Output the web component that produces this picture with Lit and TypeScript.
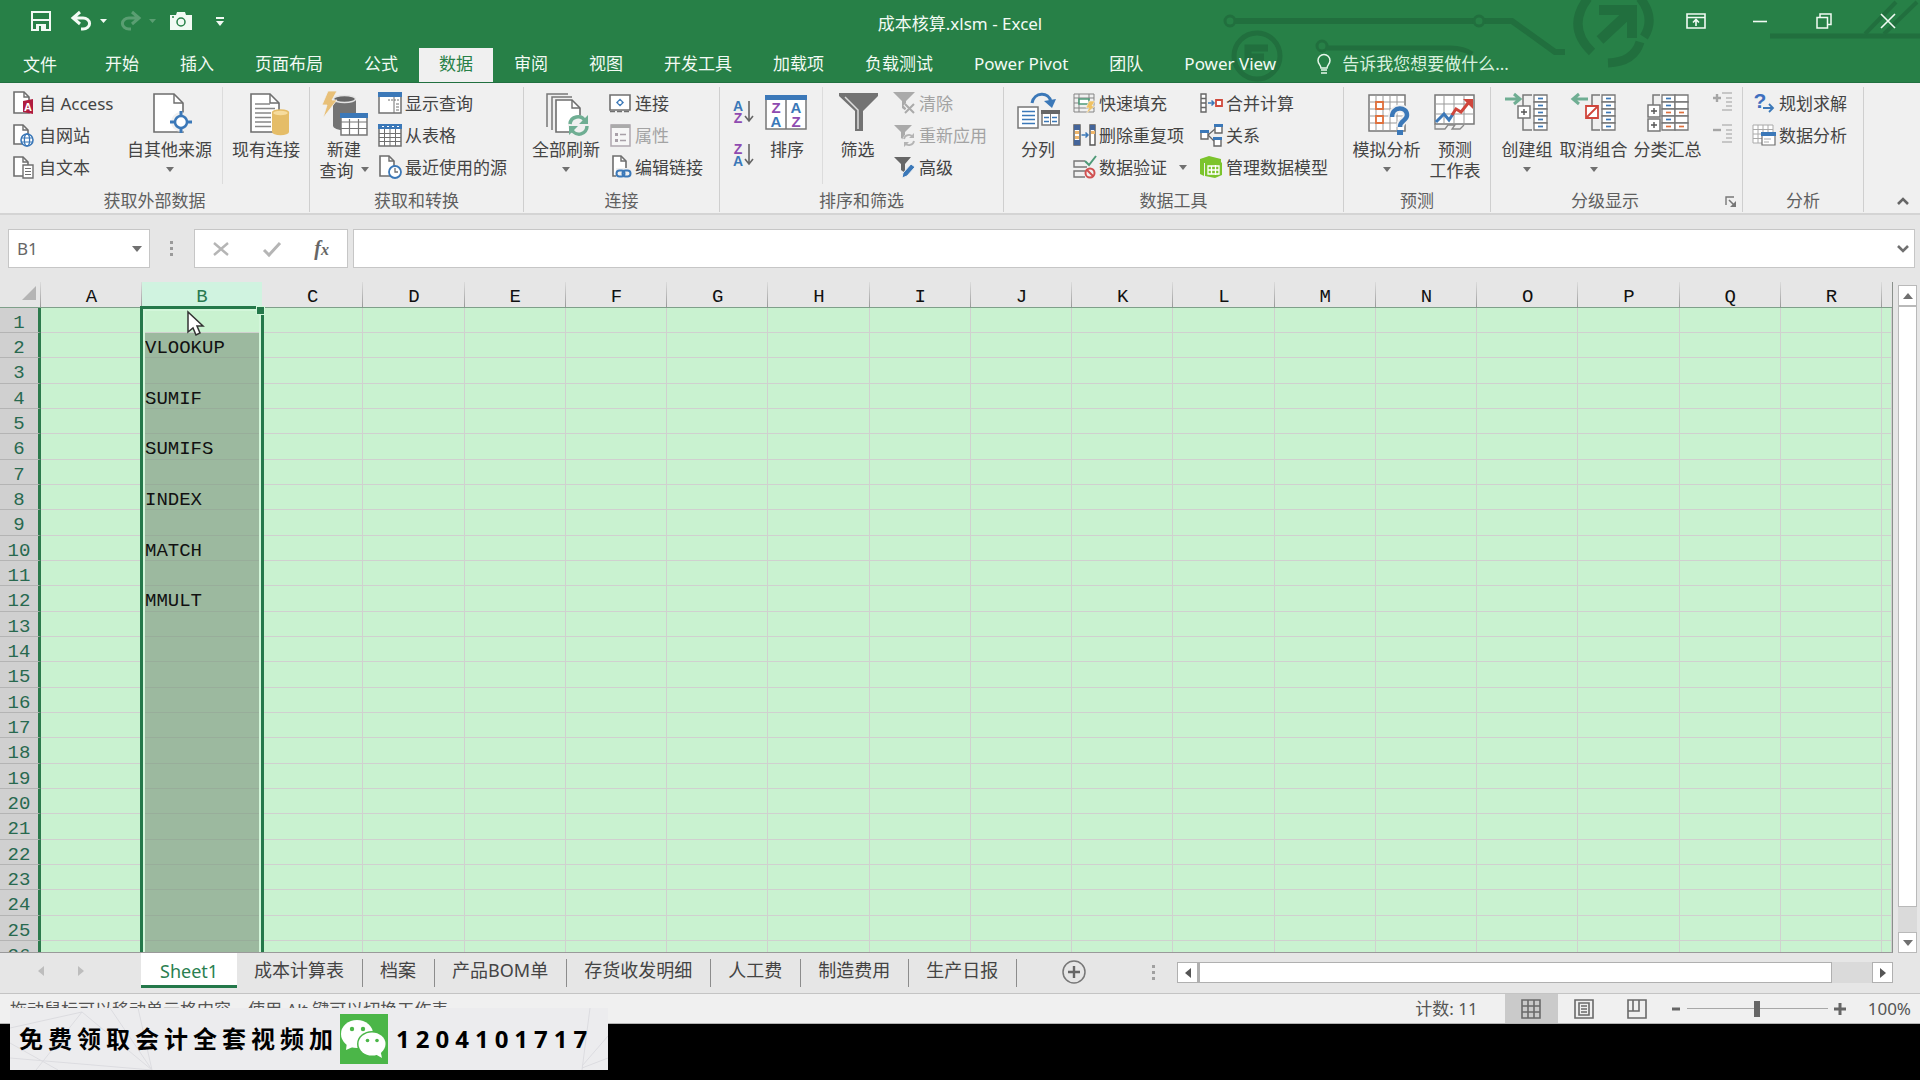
import { LitElement, html, css, svg, nothing, TemplateResult } from "lit";
import { customElement, property } from "lit/decorators.js";
import { classMap } from "lit/directives/class-map.js";

const box = (w: number, h: number, body: unknown) =>
  html`<svg width=${w} height=${h} viewBox="0 0 ${w} ${h}" fill="none" aria-hidden="true">${body}</svg>`;

const page = (x: number, y: number, w: number, h: number, f: number) => svg`
  <path d="M${x} ${y}H${x + w - f}L${x + w} ${y + f}V${y + h}H${x}Z" fill="#fff" stroke="#6e6e6e" stroke-width="1.6"/>
  <path d="M${x + w - f} ${y}V${y + f}H${x + w}" stroke="#6e6e6e" stroke-width="1.4"/>`;

const glyph = (x: number, y: number, size: number, color: string, ch: string) =>
  svg`<text x=${x} y=${y} font-size=${size} font-weight="700" font-family="Liberation Sans, sans-serif" text-anchor="middle" fill=${color}>${ch}</text>`;

const BLUE = "#3b78b8";
const PURPLE = "#8f4bb0";
const GREY = "#707070";

/* Small 24 x 24 command icons */
const small: Record<string, TemplateResult> = {
  access: box(24, 24, svg`${page(2, 1, 15, 21, 5)}<path d="M11 10L21 8V23L11 21Z" fill="#b01c3f"/>${glyph(16, 20, 11, "#fff", "A")}`),
  web: box(24, 24, svg`${page(2, 2, 14, 19, 5)}<circle cx="15" cy="17" r="6" fill="#fff" stroke=${BLUE} stroke-width="1.6"/><ellipse cx="15" cy="17" rx="2.6" ry="6" stroke=${BLUE} stroke-width="1.3"/><path d="M9 15H21M9 19H21" stroke=${BLUE} stroke-width="1.2"/>`),
  text: box(24, 24, svg`${page(2, 2, 14, 19, 5)}<path d="M11 10H21V23H11Z" fill="#fff" stroke=${GREY} stroke-width="1.4"/><path d="M13 13.500H19M13 16.500H19M13 19.500H19" stroke=${GREY}/>`),
  showQuery: box(24, 24, svg`<path d="M1 2H23V22H1Z" fill="#fff" stroke=${GREY} stroke-width="1.5"/><path d="M0 1H24V6H0Z" fill=${BLUE}/><path d="M16 6V22" stroke=${GREY}/><path d="M10 9H22" stroke=${GREY} stroke-dasharray="2 1"/><path d="M18 13H21M18 16H21M18 19H21" stroke=${GREY}/>`),
  fromTable: box(24, 24, svg`<path d="M1 2H23V23H1Z" fill="#fff" stroke=${GREY} stroke-width="1.5"/><path d="M6.500 6V23M12 6V23M17.500 6V23M1 10.500H23M1 14.500H23M1 18.500H23" stroke=${GREY}/><path d="M0 1H24V6H0Z" fill=${BLUE}/><path d="M4 3.500H21" stroke="#fff" stroke-dasharray="2 3"/>`),
  recent: box(24, 24, svg`${page(2, 1, 14, 20, 5)}<circle cx="17" cy="17" r="6" fill="#fff" stroke=${BLUE} stroke-width="1.8"/><path d="M17 13V17H20" stroke=${GREY} stroke-width="1.3"/>`),
  conn: box(24, 24, svg`<path d="M2 4H22V19H2Z" fill="#fff" stroke=${GREY} stroke-width="1.6"/><path d="M2 20.500H22" stroke=${GREY} stroke-width="1.5" stroke-dasharray="5 2"/><path d="M12 7.500L16 11.500L12 15.500L8 11.500Z" fill=${BLUE}/><circle cx="12" cy="11.500" r="1.700" fill="#fff"/>`),
  props: box(24, 24, svg`<path d="M3 2H22V23H3Z" fill="#f6f6f6" stroke="#b0a8b0" stroke-width="1.5"/><path d="M3 1.500H22V5H3Z" fill="#aaa"/><path d="M7 10H10V13H7ZM7 16H10V19H7Z" fill="#a8a0a8"/><path d="M12 11.500H18M12 17.500H18" stroke="#a8a0a8" stroke-width="1.4"/>`),
  editLinks: box(24, 24, svg`${page(5, 1, 13, 20, 5)}<path d="M8 13H24V24H8Z" fill="#f0f0f0"/><rect x="8.500" y="15.500" width="8" height="6" rx="3" stroke=${BLUE} stroke-width="2"/><rect x="14.500" y="15.500" width="8" height="6" rx="3" stroke=${BLUE} stroke-width="2"/>`),
  clear: box(24, 24, svg`<path d="M1 1H23L14 10V20L10 17V10Z" fill="#aaa"/><path d="M13 13L22 22M22 13L13 22" stroke="#f0f0f0" stroke-width="4.500"/><path d="M13 13L22 22M22 13L13 22" stroke="#aaa" stroke-width="2"/>`),
  reapply: box(24, 24, svg`<path d="M2 2H20L13 9V18L9 15V9Z" fill="#aaa"/><circle cx="17" cy="17" r="6.500" fill="#f0f0f0"/><path d="M12 16A5 5 0 0 1 21 14M22 18A5 5 0 0 1 13 20" stroke="#b4b4b4" stroke-width="1.8"/><path d="M22 10V15H17ZM12 24V19H17Z" fill="#b4b4b4"/>`),
  advanced: box(24, 24, svg`<path d="M2 2H19L13 9V18L9 15V9Z" fill="#666"/><path d="M10 23L11 18L19 9L23 12L15 21Z" fill=${BLUE} stroke="#f0f0f0"/>`),
  flash: box(24, 24, svg`<path d="M2 3H22V21H2ZM2 7H22M2 12H22M2 17H22M7 3V21M17 3V21" stroke="#858585"/><path d="M7 8H17V13H7Z" fill="#fff" stroke="#4f9a78" stroke-width="1.600"/><path d="M17 10H23L20 15H23L14 23L17 17H14Z" fill="#efc264" stroke="#f0f0f0" stroke-width=".6"/>`),
  dedupe: box(24, 24, svg`<path d="M2 2H8V22H2ZM18 2H23V22H18Z" fill="#fff" stroke="#555" stroke-width="1.4"/><path d="M2 2H8V7H2ZM2 17H8V22H2ZM18 2H23V7H18Z" fill="#44659a"/><path d="M3 8H7V11H3ZM3 13H7V16H3ZM19 8H23V11H19Z" fill="#efb66a"/><path d="M9.500 12H16M13.500 9.500L16 12L13.500 14.500" stroke=${BLUE} stroke-width="1.500"/>`),
  validate: box(24, 24, svg`<path d="M13 6H2V12H15M13 16H2V22H13" stroke="#777" stroke-width="1.400"/><path d="M13 6L17 10L24 1" stroke="#4f9a78" stroke-width="2"/><circle cx="18" cy="18" r="4.500" stroke="#d05050" stroke-width="2"/><path d="M15 15L21 21" stroke="#d05050" stroke-width="2"/>`),
  consolidate: box(24, 24, svg`<path d="M2 3H7V21H2ZM2 7.500H7M2 12H7M2 16.500H7" fill="#fff" stroke="#666" stroke-width="1.400"/><path d="M9 12H15M12.500 9.500L15 12L12.500 14.500" stroke=${BLUE} stroke-width="1.500"/><path d="M17 9H23V15H17Z" fill="#fff" stroke="#d04a3c" stroke-width="1.800"/>`),
  relations: box(24, 24, svg`<path d="M9 12L16 6M9 12L15 18" stroke="#666" stroke-width="1.300"/><path d="M2 8H9V16H2ZM16 2H23V10H16ZM15 15H22V23H15Z" fill="#fff" stroke="#666" stroke-width="1.400"/><path d="M1 7H10V10H1ZM15 1H24V4H15ZM14 14H23V17H14Z" fill=${BLUE}/>`),
  model: box(24, 24, svg`<path d="M1 4L10 1L22 4V8H5V21L1 19Z" fill="#7cc42c"/><path d="M6 8L20 5L23 8V20L16 23L6 21Z" fill="#7cc42c"/><path d="M9 11H20V19H9ZM9 15H20M12.500 11V19M16.500 10V20" stroke="#fff" stroke-width="1.300"/>`),
  expand: box(24, 24, svg`<path d="M1 8H9M5 4V12" stroke="#a5a5a5" stroke-width="2.400"/><path d="M10 3H20M14 8H20M14 12H20M14 16H20M10 20H20" stroke="#b8b8b8" stroke-width="1.400"/>`),
  shrink: box(24, 24, svg`<path d="M1 8H9" stroke="#a5a5a5" stroke-width="2.400"/><path d="M10 3H20M14 8H20M14 12H20M14 16H20M10 20H20" stroke="#b8b8b8" stroke-width="1.400"/>`),
  solver: box(24, 24, svg`${glyph(8, 17, 21, "#3f6fbf", "?")}<path d="M11 17H21M17 13L21 17L17 21" stroke=${BLUE} stroke-width="1.800"/>`),
  analysis: box(24, 24, svg`<path d="M1 2H21V20H1ZM1 6.500H21M1 11H21M1 15.500H21M6 2V20M11 2V20M16 2V20" fill="#fff" stroke="#aaa"/><path d="M10 10H23V22H10Z" fill="#fff" stroke=${GREY} stroke-width="1.200"/><path d="M9 9H24V13H9Z" fill=${BLUE}/><path d="M12 16H19M12 19H17" stroke="#aaa"/>`),
  sortAsc: box(24, 24, svg`${glyph(6, 11, 14, BLUE, "A")}${glyph(6, 23, 14, PURPLE, "Z")}<path d="M17 1V20M13 16L17 21L21 16" stroke="#666" stroke-width="1.600"/>`),
  sortDesc: box(24, 24, svg`${glyph(6, 11, 14, PURPLE, "Z")}${glyph(6, 23, 14, BLUE, "A")}<path d="M17 1V20M13 16L17 21L21 16" stroke="#666" stroke-width="1.600"/>`),
};

const cells = (x: number, w: number, colors: string[]) =>
  colors.map((c, i) => svg`<path d="M${x} ${4 + i * 7}H${x + w}V${11 + i * 7}H${x}Z" fill="#fff" stroke="#777" stroke-width="1.300"/>
    ${c ? svg`<path d="M${x + 4} ${7.5 + i * 7}H${x + w - 4}" stroke=${c} stroke-width="1.700"/>` : nothing}`);

/* Large 48 x 46 command icons */
const large: Record<string, TemplateResult> = {
  otherSource: box(48, 46, svg`${page(8, 3, 29, 38, 9)}<circle cx="35" cy="31" r="10" fill="#f0f0f0"/><circle cx="35" cy="31" r="6" fill="#fff" stroke=${BLUE} stroke-width="2.500"/><path d="M35 20V26M35 36V42M24 31H30M40 31H46" stroke=${BLUE} stroke-width="3"/>`),
  existing: box(48, 46, svg`${page(9, 3, 28, 38, 9)}<path d="M13 13H28M13 17.500H33M13 22H29M13 26.500H29M13 31H29M13 35.500H29" stroke="#888" stroke-width="1.400"/><path d="M30 22V41A8 3 0 0 0 47 41V22Z" fill="#e5bd68"/><ellipse cx="38.500" cy="22" rx="8" ry="3" fill="#f6dc9e" stroke="#e5bd68" stroke-width="1.500"/>`),
  newQuery: box(48, 46, svg`<path d="M13 8V35A11 4 0 0 0 36 35V8Z" fill="#737373"/><ellipse cx="24.500" cy="8" rx="11" ry="3.500" fill="#666" stroke="#e4e4e4" stroke-width="1.500"/><path d="M8 0H17L12 9H17L3 27L7 14H2Z" fill="#e8c078" stroke="#f0f0f0" stroke-width=".8"/><path d="M21 24H47V44H21Z" fill="#fff" stroke="#777" stroke-width="1.500"/><path d="M21 31H47M21 37.500H47M29.500 28V44M38.500 28V44" stroke="#777" stroke-width="1.200"/><path d="M20 22H48V27H20Z" fill=${BLUE}/>`),
  refresh: box(48, 46, svg`<path d="M5 36V3H26M10 39V6H30" stroke="#777" stroke-width="1.500"/>${page(14, 9, 24, 32, 8)}<circle cx="36" cy="34" r="10" fill="#f0f0f0"/><path d="M28 33A8 8 0 0 1 43 30M45 35A8 8 0 0 1 30 39" stroke="#6fae93" stroke-width="3.500"/><path d="M46 24V33H37ZM27 44V35H36Z" fill="#6fae93"/>`),
  sort: box(48, 46, svg`<path d="M3 5H43V38H3ZM23 8V38" fill="#fff" stroke="#777" stroke-width="1.500"/><path d="M2 4H44V9H2Z" fill=${BLUE}/>${glyph(13, 22, 15, PURPLE, "Z")}${glyph(13, 36, 15, BLUE, "A")}${glyph(33, 22, 15, BLUE, "A")}${glyph(33, 36, 15, PURPLE, "Z")}`),
  filter: box(48, 46, svg`<path d="M5 2H44V5L29 20V40H21V20L5 5Z" fill="#737373"/><path d="M11 6L24 19V38" stroke="#ddd" stroke-width="1.500"/>`),
  split: box(48, 46, svg`<path d="M18 12C20 1 35 0 37 11" stroke=${BLUE} stroke-width="3"/><path d="M30 10L38 17L42 8Z" fill=${BLUE}/><path d="M4 16H24V37H4Z" fill="#fff" stroke="#777" stroke-width="1.500"/><path d="M8 20.500H21M8 24.500H21M8 28.500H21M8 32.500H21" stroke=${BLUE} stroke-width="1.500"/><path d="M28 20H45V34H28Z" fill="#fff" stroke="#777" stroke-width="1.500"/><path d="M27 19H46V23H27Z" fill="#666"/><path d="M36.500 23V34" stroke="#777"/><path d="M30 26.500H43M30 30.500H43" stroke=${BLUE} stroke-width="1.500" stroke-dasharray="5 3"/>`),
  whatIf: box(48, 46, svg`<path d="M6 4H42V40H6Z" fill="#fff" stroke="#777" stroke-width="1.500"/><path d="M13 4V40M20 4V40M27 4V40M34 4V40M6 11H42M6 18H42M6 25H42M6 32H42" stroke="#999"/><path d="M13 11H20V18H13ZM13 25H20V32H13Z" fill="#fff" stroke="#e0703c" stroke-width="1.800"/><path d="M29 26C29 15 44 15 44 24C44 30 37 29 37 36" stroke="#f0f0f0" stroke-width="8"/><path d="M29 26C29 15 44 15 44 24C44 30 37 29 37 36" stroke=${BLUE} stroke-width="4.500"/><path d="M34 39H40V44H34Z" fill=${BLUE}/>`),
  forecast: box(48, 46, svg`<path d="M4 4H43V33H4Z" fill="#fff" stroke="#777" stroke-width="1.500"/><path d="M13 4V33M23 4V33M33 4V33M4 13H43M4 23H43" stroke="#999"/><path d="M4 33V38H14L17 34H24L21 38H29L33 34" stroke="#888" stroke-width="1.300"/><path d="M5 31L13 23L18 29L22 23" stroke=${BLUE} stroke-width="3"/><path d="M21 24L25 18L30 21L38 11" stroke="#d0463c" stroke-width="3"/><path d="M32 8H42V18Z" fill="#d0463c"/>`),
  group: box(48, 46, svg`<path d="M2 8H16M11 3L17 8L11 13" stroke="#6fae93" stroke-width="3"/><path d="M29 4H20V15M20 27V39H29" stroke="#777" stroke-width="1.500"/><path d="M15 15H27V27H15Z" fill="#fff" stroke="#777" stroke-width="1.500"/><path d="M18 21H24M21 18V24" stroke="#555" stroke-width="1.400"/>${cells(31, 13, [BLUE, BLUE, BLUE, BLUE, BLUE])}`),
  ungroup: box(48, 46, svg`<path d="M18 8H4M9 3L3 8L9 13" stroke="#6fae93" stroke-width="3"/><path d="M30 4H22V15M22 27V39H30" stroke="#777" stroke-width="1.500"/><path d="M16 15H28V27H16ZM17 26L27 16" fill="#fff" stroke="#d0463c" stroke-width="1.800"/>${cells(32, 13, [BLUE, BLUE, BLUE, BLUE, BLUE])}`),
  subtotal: box(48, 46, svg`<path d="M16 4H9V14" stroke="#777" stroke-width="1.500"/><path d="M4 14H16V26H4ZM4 28H16V40H4Z" fill="#fff" stroke="#777" stroke-width="1.500"/><path d="M7 20H13M10 17V23M7 34H13M10 31V37" stroke="#555" stroke-width="1.400"/>${cells(18, 13, [BLUE, BLUE, "#e0703c", BLUE, "#e0703c"])}${cells(31, 13, ["", "", "#e0703c", "", "#e0703c"])}`),
};

const caret = html`<svg class="caret" width="8" height="5" viewBox="0 0 8 5" aria-hidden="true"><path d="M0 0H8L4 5Z" fill="#707070"/></svg>`;

const font = css`
  :host { box-sizing: border-box; font-family: "Noto Sans", "Noto Sans CJK SC", sans-serif; }
  * { box-sizing: border-box; }
  button, input { font: inherit; color: inherit; border: 0; padding: 0; margin: 0; background: none; }
  svg { display: block; flex: none; overflow: visible; }
`;

/* ---------- Title bar and ribbon tabs ---------- */
@customElement("title-bar")
class TitleBar extends LitElement {
  static styles = [font, css`
    :host { display: block; position: relative; background: #278047; color: #f2faf4; font-size: 17px; line-height: 24px; border-bottom: 1px solid #217040; }
    .art { position: absolute; top: 0; right: 0; overflow: hidden; }
    .top { position: relative; display: grid; grid-template-columns: 1fr auto 1fr; align-items: center; height: 47px; }
    .quick { display: flex; align-items: center; align-self: start; padding-left: 30px; height: 42px; }
    .quick button { display: flex; align-items: center; }
    .save { margin-right: 19px; }
    .undo, .redo { gap: 8px; margin-right: 13px; }
    .redo { opacity: .25; }
    .camera { margin-right: 23px; }
    .win { display: flex; justify-content: flex-end; align-self: start; height: 42px; }
    .win button { width: 64px; display: grid; place-items: center; }
    .tabs { position: relative; display: flex; height: 34px; margin-top: 1px; gap: 1px; }
    .tab { padding: 0 20px; white-space: nowrap; line-height: 30px; padding-bottom: 3px; }
    .tab.file { padding: 0 27px 0 23px; }
    .tab.on { background: #f0f0f0; color: #278047; }
    .tell { display: flex; align-items: center; gap: 11px; margin-left: 20px; padding-bottom: 2px; }
    .tell input { width: 180px; }
    .tell input::placeholder { color: #d9f0df; opacity: 1; }
  `];
  render() {
    const tabs = ["文件", "开始", "插入", "页面布局", "公式", "数据", "审阅", "视图", "开发工具", "加载项", "负载测试", "Power Pivot", "团队", "Power View"];
    const down = svg`<path d="M0 0H7L3.500 4Z" fill="#f2faf4"/>`;
    return html`
      <svg class="art" width="700" height="82" viewBox="0 0 700 82" fill="none" stroke="#216f3e" stroke-width="6" aria-hidden="true">
        <circle cx="10" cy="21" r="5" stroke-width="3"/><path d="M15 21H255M263 21H292L335 52H345" />
        <circle cx="259" cy="21" r="5" stroke-width="3"/>
        <circle cx="102" cy="46" r="5" stroke-width="3"/><path d="M107 48H230Q244 48 252 54" stroke-width="5"/>
        <circle cx="37" cy="56" r="23" stroke-width="5"/><path d="M28 68V48H48M30 57H44" stroke-width="7"/>
        <path d="M368 -2Q346 27 372 52M420 -2Q436 18 424 37M420 42Q414 62 388 63" stroke-width="9"/>
        <path d="M379 10H412V38M410 12L380 40" stroke-width="10"/>
        <path d="M550 36H700" stroke-width="5"/><path d="M645 34L676 2M664 34L697 2" stroke-width="4"/>
      </svg>
      <div class="top">
        <div class="quick">
          <button class="save" aria-label="保存">${box(22, 22, svg`<path d="M2 2H20V20H2Z" stroke="#f2faf4" stroke-width="2"/><path d="M2 10H20" stroke="#f2faf4" stroke-width="2"/><path d="M6 14H16V21H6Z" fill="#f2faf4"/><path d="M9 16H11V21H9Z" fill="#278047"/>`)}</button>
          <button class="undo" aria-label="撤消">${box(21, 20, svg`<path d="M9 1L2 7L9 13M3 7H12A6 5 0 0 1 12 18H10" stroke="#f2faf4" stroke-width="3"/>`)}${box(7, 5, down)}</button>
          <button class="redo" aria-label="恢复" disabled>${box(21, 20, svg`<path d="M12 1L19 7L12 13M18 7H9A6 5 0 0 0 9 18H11" stroke="#f2faf4" stroke-width="3"/>`)}${box(7, 5, down)}</button>
          <button class="camera" aria-label="照相机">${box(24, 20, svg`<path d="M1 4H7L8 1H16L17 4H23V19H1Z" fill="#f2faf4"/><circle cx="12" cy="11" r="4" stroke="#278047" stroke-width="1.500"/><path d="M3 6H5" stroke="#278047" stroke-width="1.500"/>`)}</button>
          <button aria-label="自定义快速访问工具栏">${box(8, 9, svg`<path d="M0 1H8" stroke="#f2faf4" stroke-width="2"/><path d="M0 4H8L4 9Z" fill="#f2faf4"/>`)}</button>
        </div>
        <div>成本核算.xlsm - Excel</div>
        <div class="win">
          <button aria-label="功能区显示选项">${box(20, 16, svg`<path d="M1 1H19V15H1ZM1 4.500H19" stroke="#f2faf4" stroke-width="1.600"/><path d="M10 13V7M7 9.500L10 6.500L13 9.500" stroke="#f2faf4" stroke-width="1.600"/>`)}</button>
          <button aria-label="最小化">${box(16, 16, svg`<path d="M1 8.500H15" stroke="#f2faf4" stroke-width="1.600"/>`)}</button>
          <button aria-label="还原">${box(16, 16, svg`<path d="M1 4.500H11.500V15H1ZM4 4V1H15V11.500H12" stroke="#f2faf4" stroke-width="1.500"/>`)}</button>
          <button aria-label="关闭">${box(16, 16, svg`<path d="M1 1L15 15M15 1L1 15" stroke="#f2faf4" stroke-width="1.600"/>`)}</button>
        </div>
      </div>
      <nav class="tabs" role="tablist">
        ${tabs.map((t, i) => html`<button role="tab" aria-selected=${t === "数据"} class=${classMap({ tab: true, file: i === 0, on: t === "数据" })}>${t}</button>`)}
        <label class="tell">
          ${box(14, 20, svg`<path d="M4 14C4 11 1 10 1 6.500A6 6 0 0 1 13 6.500C13 10 10 11 10 14Z" stroke="#e6f6ea" stroke-width="1.500"/><path d="M4 16H10M4 19H10" stroke="#e6f6ea" stroke-width="1.500"/>`)}
          <input type="text" aria-label="告诉我您想要做什么" placeholder="告诉我您想要做什么..." />
        </label>
      </nav>`;
  }
}

/* ---------- Ribbon ---------- */
type Small = { i: string; t?: string; off?: boolean; drop?: boolean; name?: string };
type Item = { big?: string; t?: string; t2?: string; drop?: boolean; line?: boolean; list?: Small[]; kind?: string };
type Group = { id: string; label: string; launcher?: boolean; items: Item[] };

const GROUPS: Group[] = [
  { id: "external", label: "获取外部数据", items: [
    { list: [{ i: "access", t: "自 Access" }, { i: "web", t: "自网站" }, { i: "text", t: "自文本" }] },
    { big: "otherSource", t: "自其他来源", drop: true, line: true },
    { big: "existing", t: "现有连接" }] },
  { id: "transform", label: "获取和转换", items: [
    { big: "newQuery", t: "新建", t2: "查询", drop: true },
    { list: [{ i: "showQuery", t: "显示查询" }, { i: "fromTable", t: "从表格" }, { i: "recent", t: "最近使用的源" }] }] },
  { id: "connections", label: "连接", items: [
    { big: "refresh", t: "全部刷新", drop: true },
    { list: [{ i: "conn", t: "连接" }, { i: "props", t: "属性", off: true }, { i: "editLinks", t: "编辑链接" }] }] },
  { id: "sorting", label: "排序和筛选", items: [
    { kind: "pair", list: [{ i: "sortAsc", name: "升序" }, { i: "sortDesc", name: "降序" }] },
    { big: "sort", t: "排序", line: true },
    { big: "filter", t: "筛选" },
    { list: [{ i: "clear", t: "清除", off: true }, { i: "reapply", t: "重新应用", off: true }, { i: "advanced", t: "高级" }] }] },
  { id: "tools", label: "数据工具", items: [
    { big: "split", t: "分列" },
    { list: [{ i: "flash", t: "快速填充" }, { i: "dedupe", t: "删除重复项" }, { i: "validate", t: "数据验证", drop: true }] },
    { list: [{ i: "consolidate", t: "合并计算" }, { i: "relations", t: "关系" }, { i: "model", t: "管理数据模型" }] }] },
  { id: "forecast", label: "预测", items: [
    { big: "whatIf", t: "模拟分析", drop: true },
    { big: "forecast", t: "预测", t2: "工作表" }] },
  { id: "outline", label: "分级显示", launcher: true, items: [
    { big: "group", t: "创建组", drop: true },
    { big: "ungroup", t: "取消组合", drop: true },
    { big: "subtotal", t: "分类汇总" },
    { kind: "levels", list: [{ i: "expand", name: "显示明细数据", off: true }, { i: "shrink", name: "隐藏明细数据", off: true }] }] },
  { id: "analyze", label: "分析", items: [
    { list: [{ i: "solver", t: "规划求解" }, { i: "analysis", t: "数据分析" }] }] },
];

@customElement("ribbon-panel")
class RibbonPanel extends LitElement {
  static styles = [font, css`
    :host { display: flex; background: #f0f0f0; border-bottom: 2px solid #d4d4d4; font-size: 17px; line-height: 21px; color: #444; padding: 4px 0 1px; }
    .group { display: flex; flex-direction: column; border-right: 1px solid #cfcfcf; }
    .body { display: grid; height: 97px; margin-bottom: 5px; }
    .external .body { grid-template-columns: 105px 106px 86px; padding-left: 12px; }
    .transform .body { grid-template-columns: 68px 145px; }
    .connections .body { grid-template-columns: 84px 111px; }
    .sorting .body { grid-template-columns: 20px 71px 69px 111px; padding-left: 12px; }
    .tools .body { grid-template-columns: 68px 127px 144px; }
    .forecast .body { grid-template-columns: 85px 61px; }
    .outline .body { grid-template-columns: 60px 73px 82px 30px; padding-left: 6px; }
    .analyze .body { grid-template-columns: 111px; padding-left: 9px; }
    .forecast .big:last-child { padding-right: 9px; }
    .outline .big:nth-child(3) { padding-right: 7px; }
    .foot { display: flex; align-items: center; justify-content: center; color: #5f5f5f; height: 23px; }
    .outline .foot { justify-content: flex-end; gap: 86px; padding: 2px 5px 0 0; }
    .outline .foot span { margin-top: -2px; }
    .big { display: flex; flex-direction: column; align-items: center; padding-top: 4px; white-space: nowrap; }
    .big svg:first-child { margin-bottom: 2px; }
    .more { height: 21px; display: flex; align-items: center; justify-content: center; gap: 7px; }
    .line { border-right: 1px solid #dcdcdc; }
    .list { display: flex; flex-direction: column; }
    .cmd { height: 32px; display: flex; align-items: center; gap: 3px; white-space: nowrap; text-align: left; }
    .cmd .caret { margin-left: 9px; }
    .off { color: #a3a3a3; }
    .pair { gap: 19px; padding-top: 13px; }
    .pair .cmd, .levels .cmd { height: 24px; }
    .levels { gap: 8px; padding-top: 3px; }
    .collapse { margin-left: auto; align-self: flex-end; padding: 0 10px; height: 22px; display: flex; align-items: center; }
  `];
  item(it: Item) {
    if (it.list) {
      return html`<div class="list ${it.kind ?? ""}">${it.list.map((c) => html`
        <button class=${classMap({ cmd: true, off: !!c.off })} ?disabled=${!!c.off} aria-label=${c.t ?? c.name ?? ""}>
          ${small[c.i]}${c.t ? html`<span>${c.t}</span>` : nothing}${c.drop ? caret : nothing}
        </button>`)}</div>`;
    }
    return html`<button class=${classMap({ big: true, line: !!it.line })}>
      ${large[it.big!]}<span>${it.t}</span>
      <span class="more">${it.t2 ?? nothing}${it.drop ? caret : nothing}</span>
    </button>`;
  }
  render() {
    return html`${GROUPS.map((g) => html`
      <section class="group ${g.id}">
        <div class="body">${g.items.map((i) => this.item(i))}</div>
        <div class="foot"><span>${g.label}</span>${g.launcher ? html`<button aria-label="分级显示设置">${box(12, 12, svg`<path d="M1 9V1H9" stroke="#777" stroke-width="1.400"/><path d="M4 4L10 10" stroke="#777" stroke-width="1.600"/><path d="M11 5V11H5Z" fill="#777"/>`)}</button>` : nothing}</div>
      </section>`)}
      <button class="collapse" aria-label="折叠功能区">${box(14, 10, svg`<path d="M2 8L7 3L12 8" stroke="#666" stroke-width="2.600"/>`)}</button>`;
  }
}

/* ---------- Formula bar ---------- */
@customElement("formula-bar")
class FormulaBar extends LitElement {
  static styles = [font, css`
    :host { display: flex; align-items: center; background: #e6e6e6; padding: 14px 5px 14px 8px; font-size: 17px; color: #666; }
    .box { height: 39px; background: #fff; border: 1px solid #c6c6c6; display: flex; align-items: center; }
    .name { width: 142px; padding: 0 7px 0 8px; }
    .name input { width: 100%; min-width: 0; flex: 1; }
    .dots { margin: 0 20px; }
    .ops { width: 154px; justify-content: space-between; padding: 0 18px; margin-right: 5px; }
    .fx { font: italic 700 20px/24px "Liberation Serif", serif; color: #666; }
    .fx small { font-size: 16px; }
    .formula { flex: 1; padding: 0 5px; }
    .formula input { flex: 1; }
  `];
  render() {
    return html`
      <div class="box name"><input aria-label="名称框" .value=${"B1"} /><button aria-label="名称列表">${box(10, 6, svg`<path d="M0 0H10L5 6Z" fill="#707070"/>`)}</button></div>
      <svg class="dots" width="4" height="16" viewBox="0 0 4 16" fill="#9a9a9a" aria-hidden="true"><path d="M0 0H3V3H0ZM0 6H3V9H0ZM0 12H3V15H0Z"/></svg>
      <div class="box ops">
        <button aria-label="取消">${box(16, 16, svg`<path d="M1 2L15 14M15 2L1 14" stroke="#b5b5b5" stroke-width="2.400"/>`)}</button>
        <button aria-label="输入">${box(18, 16, svg`<path d="M1 9L6 14L17 2" stroke="#b5b5b5" stroke-width="3"/>`)}</button>
        <button class="fx" aria-label="插入函数">f<small>x</small></button>
      </div>
      <div class="box formula"><input aria-label="编辑栏" /><button aria-label="展开编辑栏">${box(12, 10, svg`<path d="M1 2L6 7L11 2" stroke="#707070" stroke-width="2.600"/>`)}</button></div>`;
  }
}

/* ---------- Worksheet grid ---------- */
@customElement("sheet-grid")
class SheetGrid extends LitElement {
  @property({ attribute: false }) values: Record<number, string> = {};
  static styles = [font, css`
    :host { display: flex; background: #e6e6e6; min-height: 0; overflow: hidden; }
    .pane { position: relative; flex: 1; min-width: 0; overflow: hidden; border-right: 1px solid #8a908b; border-bottom: 1px solid #9a9a9a; }
    table { width: 100%; table-layout: fixed; border-collapse: separate; border-spacing: 0; font: 19px/18px "Liberation Mono", monospace; color: #111; }
    .rowhead { width: 41px; }
    .colA { width: 101px; }
    .colB { width: 120px; }
    .rest { width: 10px; }
    th, td { padding: 6px 0 0; font-weight: 400; white-space: nowrap; vertical-align: top; }
    thead th { height: 26px; background: linear-gradient(90deg, #e6e6e6, #e6e6e6) left / calc(100% - 1px) 100% no-repeat, linear-gradient(#dcdcdc, #9a9a9a); border-bottom: 1px solid #7fa08a; }
    thead th.sel { background: #d0f3e0; color: #2a7a50; }
    thead th.last { background: #e6e6e6; }
    thead .corner { padding-top: 4px; }
    thead .corner svg { margin: 0 5px 0 auto; }
    tbody tr { height: 25px; }
    tbody tr:nth-child(3n) { height: 26px; }
    tbody th { background: #d0d0d0; color: #28694f; border-bottom: 1px solid #b4b4b4; border-right: 3px solid #2c7a4c; }
    td { background: #c9f2d0; border-right: 1px solid #d0d0cf; border-bottom: 1px solid #d0d0cf; }
    td.fill { background: #9cb99f; border-bottom-color: #98ad9a; padding-left: 3px; }
    .outline { position: absolute; top: 24px; bottom: -6px; left: 140px; width: 124px; border: 3px solid #24784a; box-shadow: inset 0 0 0 2px #d3f6da; pointer-events: none; }
    .handle { position: absolute; top: 25px; left: 257px; width: 7px; height: 7px; background: #24784a; box-shadow: 0 0 0 1px #d3f6da; }
    .pointer { position: absolute; top: 28px; left: 186px; }
    .scroll { width: 27px; padding: 3px 3px 0 5px; display: flex; flex-direction: column; }
    .scroll button, .thumb { background: #fff; border: 1px solid #b9b9b9; }
    .scroll button { height: 21px; display: grid; place-items: center; }
    .track { flex: 1; background: #dadada; }
    .thumb { height: 96%; }
  `];
  render() {
    const cols = "ABCDEFGHIJKLMNOPQR".split("");
    const rows = Array.from({ length: 26 }, (_, i) => i + 1);
    return html`
      <div class="pane">
        <table>
          <colgroup><col class="rowhead" /><col class="colA" /><col class="colB" />${cols.slice(2).map(() => html`<col />`)}<col class="rest" /></colgroup>
          <thead><tr>
            <th class="corner" aria-label="全选">${box(14, 14, svg`<path d="M14 0V14H0Z" fill="#b4b4b4"/>`)}</th>
            ${cols.map((c) => html`<th scope="col" class=${c === "B" ? "sel" : ""}>${c}</th>`)}<th class="last"></th>
          </tr></thead>
          <tbody>${rows.map((r) => html`<tr><th scope="row">${r}</th>${cols.map((c) => html`<td class=${c === "B" && r > 1 ? "fill" : ""}>${c === "B" ? this.values[r] ?? nothing : nothing}</td>`)}<td></td></tr>`)}</tbody>
        </table>
        <div class="outline"></div>
        <div class="handle"></div>
        <svg class="pointer" width="20" height="28" viewBox="0 0 20 28" aria-hidden="true"><path d="M2 2V22L7 18L10 25L14 23L11 16H17Z" fill="#fff" stroke="#333" stroke-width="1.500"/></svg>
      </div>
      <div class="scroll">
        <button aria-label="向上滚动">${box(10, 6, svg`<path d="M0 6H10L5 0Z" fill="#707070"/>`)}</button>
        <div class="track"><div class="thumb"></div></div>
        <button aria-label="向下滚动">${box(10, 6, svg`<path d="M0 0H10L5 6Z" fill="#707070"/>`)}</button>
      </div>`;
  }
}

/* ---------- Sheet tabs ---------- */
@customElement("sheet-tabs")
class SheetTabs extends LitElement {
  static styles = [font, css`
    :host { display: flex; height: 41px; background: #e6e6e6; border-bottom: 1px solid #c4c4c4; font-size: 18px; line-height: 26px; color: #444; }
    .nav { width: 141px; display: flex; gap: 34px; padding: 0 0 4px 38px; align-items: center; }
    .nav button { width: 6px; }
    .tabs { display: flex; align-items: flex-start; }
    .tab { margin-top: 6px; height: 28px; padding: 0 18px 5px 17px; border-right: 1px solid #8c8c8c; white-space: nowrap; line-height: 23px; }
    .tab.on { margin-top: 0; height: 35px; padding: 4px 19px 0; background: #fff; color: #2a8050; border-bottom: 3px solid #24784a; border-right: 0; }
    .add { align-self: center; margin: 0 auto 2px 45px; }
    .dots { align-self: center; margin-right: 21px; }
    .bar { flex: 0 0 716px; height: 21px; margin: 9px 27px 0 0; display: flex; }
    .bar button, .thumb { background: #fff; border: 1px solid #b0b0b0; }
    .bar button { width: 21px; display: grid; place-items: center; }
    .track { flex: 1; background: #dadada; display: flex; }
    .thumb { width: 94%; border-left-width: 2px; }
  `];
  render() {
    const names = ["Sheet1", "成本计算表", "档案", "产品BOM单", "存货收发明细", "人工费", "制造费用", "生产日报"];
    return html`
      <div class="nav">
        <button aria-label="上一个工作表">${box(6, 10, svg`<path d="M6 0V10L0 5Z" fill="#bdbdbd"/>`)}</button>
        <button aria-label="下一个工作表">${box(6, 10, svg`<path d="M0 0V10L6 5Z" fill="#bdbdbd"/>`)}</button>
      </div>
      <div class="tabs" role="tablist">${names.map((n, i) => html`<button role="tab" aria-selected=${i === 0} class=${classMap({ tab: true, on: i === 0 })}>${n}</button>`)}</div>
      <button class="add" aria-label="新工作表">${box(24, 24, svg`<circle cx="12" cy="12" r="11" stroke="#777" stroke-width="1.500"/><path d="M12 6V18M6 12H18" stroke="#666" stroke-width="2.400"/>`)}</button>
      <svg class="dots" width="4" height="16" viewBox="0 0 4 16" fill="#a0a0a0" aria-hidden="true"><path d="M0 0H3V3H0ZM0 6H3V9H0ZM0 12H3V15H0Z"/></svg>
      <div class="bar">
        <button aria-label="向左滚动">${box(6, 10, svg`<path d="M6 0V10L0 5Z" fill="#555"/>`)}</button>
        <div class="track"><div class="thumb"></div></div>
        <button aria-label="向右滚动">${box(6, 10, svg`<path d="M0 0V10L6 5Z" fill="#555"/>`)}</button>
      </div>`;
  }
}

/* ---------- Status bar ---------- */
@customElement("status-bar")
class StatusBar extends LitElement {
  static styles = [font, css`
    :host { display: flex; align-items: center; height: 30px; background: #f0f0f0; border-bottom: 1px solid #b5b5b5; font-size: 17px; line-height: 27px; color: #555; padding: 0 9px 0 10px; }
    .hint { flex: 1; padding-top: 2px; height: 100%; }
    .count { margin-right: 27px; }
    .view { width: 53px; height: 29px; display: grid; place-items: center; }
    .view.on { background: #cacaca; }
    .zoom { display: flex; align-items: center; gap: 6px; margin: 0 22px 0 7px; }
    .range { appearance: none; width: 141px; height: 18px; background: linear-gradient(#a8a8a8, #a8a8a8) center / 100% 1px no-repeat; }
    .range::-webkit-slider-thumb { appearance: none; width: 6px; height: 16px; background: #666; }
  `];
  render() {
    return html`
      <div class="hint">拖动鼠标可以移动单元格内容，使用 Alt 键可以切换工作表</div>
      <div class="count">计数: 11</div>
      <button class="view on" aria-label="普通">${box(20, 20, svg`<path d="M1 1H19V19H1ZM7 1V19M13 1V19M1 7H19M1 13H19" stroke="#6a6a6a" stroke-width="1.600"/>`)}</button>
      <button class="view" aria-label="页面布局">${box(20, 20, svg`<path d="M1 1H19V19H1ZM5 4H15V16H5Z" stroke="#6a6a6a" stroke-width="1.600"/><path d="M7 7H13M7 10H13M7 13H13" stroke="#6a6a6a" stroke-width="1.300"/>`)}</button>
      <button class="view" aria-label="分页预览">${box(20, 20, svg`<path d="M1 1H19V19H1ZM1 12H12V1M6 1V12" stroke="#6a6a6a" stroke-width="1.600"/>`)}</button>
      <div class="zoom">
        <button aria-label="缩小">${box(10, 12, svg`<path d="M1 6H9" stroke="#666" stroke-width="3"/>`)}</button>
        <input class="range" type="range" aria-label="显示比例" min="10" max="190" value="100" />
        <button aria-label="放大">${box(12, 12, svg`<path d="M0 6H12M6 0V12" stroke="#666" stroke-width="3"/>`)}</button>
      </div>
      <div>100%</div>`;
  }
}

/* ---------- Contact banner over the video frame ---------- */
@customElement("contact-banner")
class ContactBanner extends LitElement {
  static styles = [font, css`
    :host { position: relative; display: flex; align-items: center; gap: 8px; width: 598px; height: 62px; padding-left: 9px; overflow: hidden; background: #ececee; color: #000; font-size: 24px; font-weight: 700; line-height: 32px; white-space: nowrap; }
    .web { position: absolute; inset: 0; }
    .text { position: relative; letter-spacing: 5px; }
    .digits { letter-spacing: 6px; }
    .logo { position: relative; margin-left: -6px; }
  `];
  render() {
    return html`
      <svg class="web" width="598" height="62" viewBox="0 0 598 62" fill="none" stroke="#dcdce0" aria-hidden="true"><path d="M0 20L72 4L26 62M72 4L142 62L100 0M0 50L142 62L128 0M0 35L48 62M572 62L580 0M572 58L598 28M572 60L598 50"/></svg>
      <span class="text">免费领取会计全套视频加</span>
      <svg class="logo" width="48" height="50" viewBox="0 0 48 50" aria-hidden="true">
        <rect width="48" height="50" fill="#4bb648"/>
        <ellipse cx="17" cy="20" rx="16" ry="14" fill="#fff"/><path d="M7 28L6 36L15 32Z" fill="#fff"/>
        <circle cx="12" cy="15" r="2.200" fill="#4bb648"/><circle cx="23" cy="15" r="2.200" fill="#4bb648"/>
        <ellipse cx="32" cy="30" rx="15" ry="13" fill="#4bb648"/><ellipse cx="32" cy="30" rx="13.500" ry="11.500" fill="#fff"/><path d="M35 40L42 44L40 35Z" fill="#fff"/>
        <circle cx="27.500" cy="26.500" r="1.800" fill="#4bb648"/><circle cx="37" cy="26.500" r="1.800" fill="#4bb648"/>
      </svg>
      <span class="text digits">1204101717</span>`;
  }
}

@customElement("app-root")
class AppRoot extends LitElement {
  static styles = css`
    :host { display: flex; flex-direction: column; height: 100vh; background: #000; position: relative; padding-bottom: 56px; box-sizing: border-box; overflow: hidden; }
    .grid { flex: 1; }
    .banner { position: absolute; left: 10px; bottom: 10px; }
  `;
  values = { 2: "VLOOKUP", 4: "SUMIF", 6: "SUMIFS", 8: "INDEX", 10: "MATCH", 12: "MMULT" };
  render() {
    return html`
      <title-bar></title-bar>
      <ribbon-panel></ribbon-panel>
      <formula-bar></formula-bar>
      <sheet-grid class="grid" .values=${this.values}></sheet-grid>
      <sheet-tabs></sheet-tabs>
      <status-bar></status-bar>
      <contact-banner class="banner"></contact-banner>`;
  }
}
